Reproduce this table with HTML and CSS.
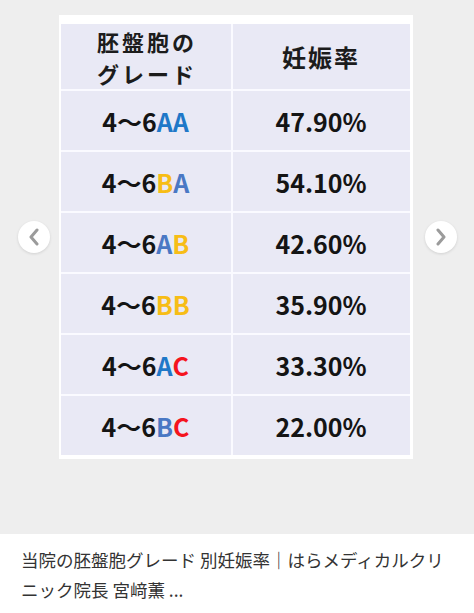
FILE: index.html
```html
<!DOCTYPE html>
<html lang="ja">
<head>
<meta charset="utf-8">
<title>胚盤胞グレード別妊娠率</title>
<link rel="stylesheet" href="styles.css">
</head>
<body>
<div class="gallery">
  <div class="card">
    <div class="grid">
      <div class="cell head"><span class="line">胚盤胞の</span><span class="line">グレード</span></div>
      <div class="cell head-single">妊娠率</div>

      <div class="cell">4～6<span class="a1">A</span><span class="a1">A</span></div>
      <div class="cell">47.90%</div>

      <div class="cell">4～6<span class="b">B</span><span class="a2">A</span></div>
      <div class="cell">54.10%</div>

      <div class="cell">4～6<span class="a2">A</span><span class="b">B</span></div>
      <div class="cell">42.60%</div>

      <div class="cell">4～6<span class="b">B</span><span class="b">B</span></div>
      <div class="cell">35.90%</div>

      <div class="cell">4～6<span class="a1">A</span><span class="c">C</span></div>
      <div class="cell">33.30%</div>

      <div class="cell">4～6<span class="a2">B</span><span class="c">C</span></div>
      <div class="cell">22.00%</div>
    </div>
  </div>
  <button class="nav prev" aria-label="前へ">
    <svg width="14" height="18" viewBox="0 0 14 18"><path d="M10 2 L4 9 L10 16" fill="none" stroke="#9b9b9b" stroke-width="3" stroke-linecap="round" stroke-linejoin="round"/></svg>
  </button>
  <button class="nav next" aria-label="次へ">
    <svg width="14" height="18" viewBox="0 0 14 18"><path d="M4 2 L10 9 L4 16" fill="none" stroke="#9b9b9b" stroke-width="3" stroke-linecap="round" stroke-linejoin="round"/></svg>
  </button>
</div>
<p class="caption">当院の胚盤胞グレード 別妊娠率｜はらメディカルクリニック院長 宮﨑薫 ...</p>
</body>
</html>
```
FILE: styles.css
```css
* { box-sizing: border-box; }
body {
  margin: 0;
  background: #ffffff;
  font-family: "Noto Sans CJK JP", "Noto Sans", sans-serif;
}
.gallery {
  position: relative;
  height: 534px;
  background: #eeeeee;
  display: flex;
  justify-content: center;
  align-items: flex-start;
  padding-top: 15px;
}
.card {
  width: 354px;
  margin-left: -3px;
  background: #ffffff;
  padding: 9px 3px 4px 2px;
}
.grid {
  display: grid;
  grid-template-columns: 170px 177px;
  grid-template-rows: 65px repeat(6, 59px);
  gap: 2px;
  background: #fafaff;
}
.cell, .head-single {
  background: #e9e9f5;
  display: flex;
  align-items: center;
  justify-content: center;
  text-align: center;
  font-weight: 700;
  font-size: 25px;
  color: #141414;
}
.head {
  flex-direction: column;
  font-size: 22px;
  line-height: 32px;
  color: #1c1c1c;
  letter-spacing: 3px;
  padding-left: 3px;
}
.head-single {
  font-size: 24px;
  color: #1c1c1c;
  letter-spacing: 2px;
}
.line { display: block; }
.a1 { color: #1f78c8; }
.a2 { color: #4a78c4; }
.b { color: #f7bd16; }
.c { color: #f5141e; }
.nav {
  position: absolute;
  top: 221px;
  width: 32px;
  height: 32px;
  border: none;
  border-radius: 50%;
  background: #ffffff;
  box-shadow: 0 1px 3px rgba(0,0,0,0.12);
  display: flex;
  align-items: center;
  justify-content: center;
  padding: 0;
}
.prev { left: 18px; }
.next { left: 425px; }
.caption {
  margin: 0;
  padding: 11px 20px 0 21px;
  font-size: 17.5px;
  line-height: 30px;
  color: #333333;
}
```
